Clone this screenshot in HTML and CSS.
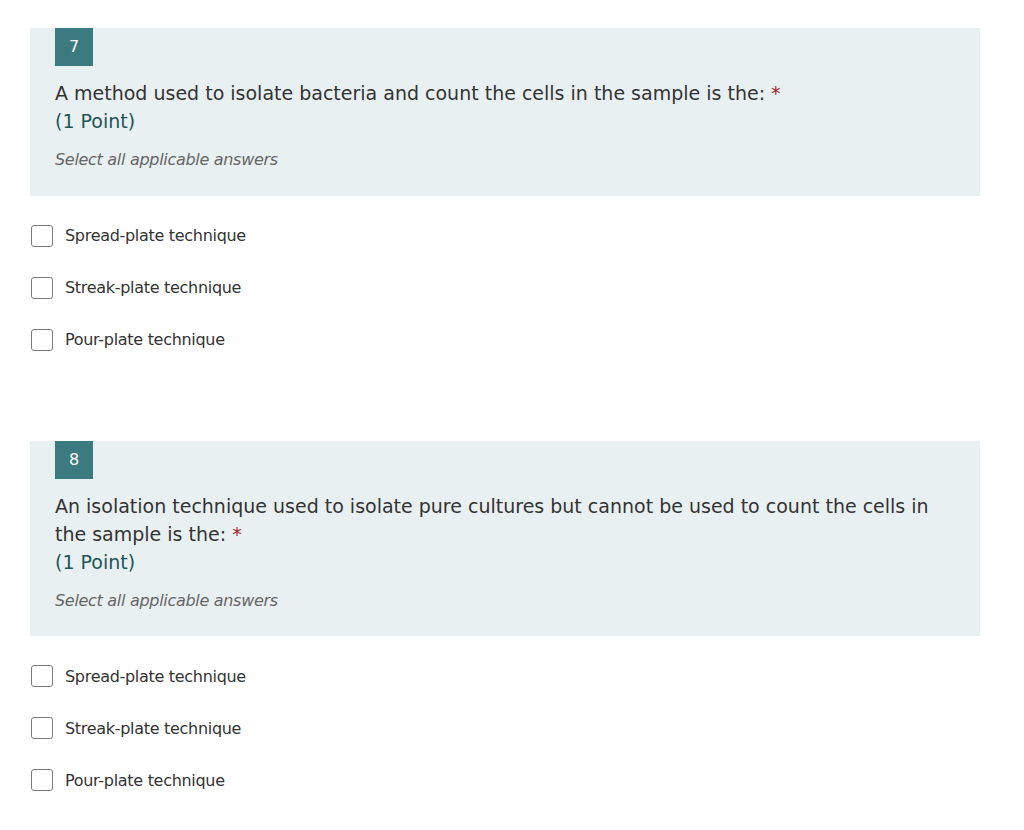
FILE: index.html
```html
<!DOCTYPE html>
<html>
<head>
<meta charset="utf-8">
<link rel="stylesheet" href="styles.css">
</head>
<body>
<main class="form">
  <section class="question q-first">
    <div class="card">
      <div class="badge">7</div>
      <div class="title">A method used to isolate bacteria and count the cells in the sample is the: <span class="req">*</span></div>
      <div class="points">(1 Point)</div>
      <div class="hint">Select all applicable answers</div>
    </div>
    <ul class="options">
      <li class="option"><span class="box"></span><span class="label">Spread-plate technique</span></li>
      <li class="option"><span class="box"></span><span class="label">Streak-plate technique</span></li>
      <li class="option"><span class="box"></span><span class="label">Pour-plate technique</span></li>
    </ul>
  </section>
  <section class="question q-second">
    <div class="card">
      <div class="badge">8</div>
      <div class="title">An isolation technique used to isolate pure cultures but cannot be used to count the cells in the sample is the: <span class="req">*</span></div>
      <div class="points">(1 Point)</div>
      <div class="hint">Select all applicable answers</div>
    </div>
    <ul class="options">
      <li class="option"><span class="box"></span><span class="label">Spread-plate technique</span></li>
      <li class="option"><span class="box"></span><span class="label">Streak-plate technique</span></li>
      <li class="option"><span class="box"></span><span class="label">Pour-plate technique</span></li>
    </ul>
  </section>
</main>
</body>
</html>
```

FILE: styles.css
```css
html, body {
  margin: 0;
  padding: 0;
  background: #ffffff;
}
body {
  font-family: "DejaVu Sans", Verdana, sans-serif;
  color: #333333;
}
.form {
  padding: 28px 0 0 30px;
  width: 950px;
}
.q-second {
  margin-top: 75px;
}
.card {
  background: #e9f0f2;
  padding: 0 25px 23.5px 25px;
}
.badge {
  width: 38px;
  height: 38px;
  background: #3b7b7f;
  color: #ffffff;
  font-size: 16px;
  line-height: 38px;
  text-align: center;
}
.title {
  margin-top: 13px;
  font-size: 19px;
  line-height: 28px;
  color: #333333;
}
.req {
  color: #a4262c;
}
.points {
  font-size: 19px;
  line-height: 28px;
  color: #1f5557;
}
.hint {
  margin-top: 13px;
  font-size: 16px;
  line-height: 24px;
  font-style: italic;
  letter-spacing: -0.3px;
  color: #666666;
}
.options {
  list-style: none;
  margin: 14px 0 0 0;
  padding: 0;
}
.option {
  height: 52px;
  display: flex;
  align-items: center;
  gap: 12px;
  padding-left: 1px;
}
.box {
  width: 20px;
  height: 20px;
  border: 1.5px solid #7a7a7a;
  border-radius: 3px;
  background: #ffffff;
  flex: none;
}
.label {
  font-size: 16px;
  letter-spacing: -0.3px;
  color: #333333;
}
```
